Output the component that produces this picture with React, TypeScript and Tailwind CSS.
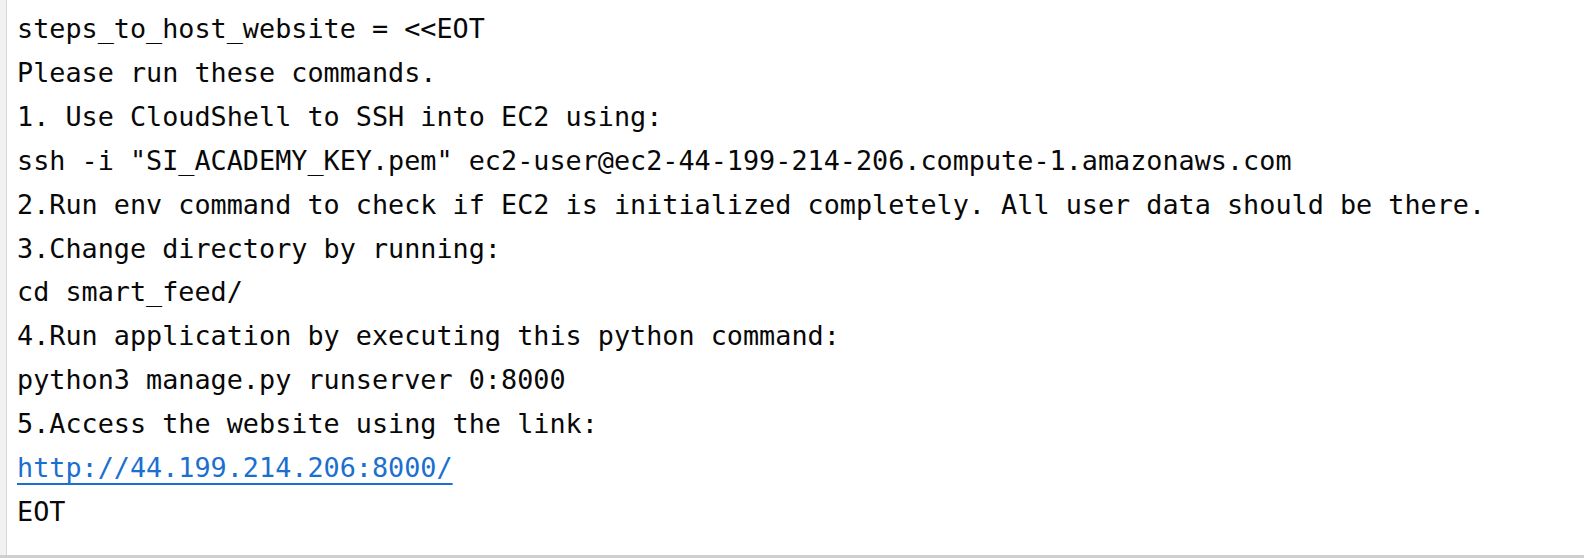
const lines: { text: string; link?: boolean }[] = [
  { text: "steps_to_host_website = <<EOT" },
  { text: "Please run these commands." },
  { text: "1. Use CloudShell to SSH into EC2 using:" },
  { text: 'ssh -i "SI_ACADEMY_KEY.pem" ec2-user@ec2-44-199-214-206.compute-1.amazonaws.com' },
  { text: "2.Run env command to check if EC2 is initialized completely. All user data should be there." },
  { text: "3.Change directory by running:" },
  { text: "cd smart_feed/" },
  { text: "4.Run application by executing this python command:" },
  { text: "python3 manage.py runserver 0:8000" },
  { text: "5.Access the website using the link:" },
  { text: "http://44.199.214.206:8000/", link: true },
  { text: "EOT" },
];

function App() {
  return (
    <div className="w-[1584px] h-[558px] flex bg-white border-b-[3px] border-[#cfcfcf] overflow-hidden">
      <div className="w-[7px] h-full bg-[#f1f1f1] border-r border-[#d6d6d6]" />
      <div className="flex-1 pl-[10px] pt-[7px] font-['DejaVu_Sans_Mono',monospace] text-[26.8px] leading-[43.9px] text-[#080808]">
        {lines.map((l, i) => (
          <div key={i} className="whitespace-pre">
            {l.link ? (
              <a href="#" className="text-[#1a6fd0] underline decoration-[2px] underline-offset-[6px]">
                {l.text}
              </a>
            ) : (
              l.text
            )}
          </div>
        ))}
      </div>
    </div>
  );
}
export default App;
